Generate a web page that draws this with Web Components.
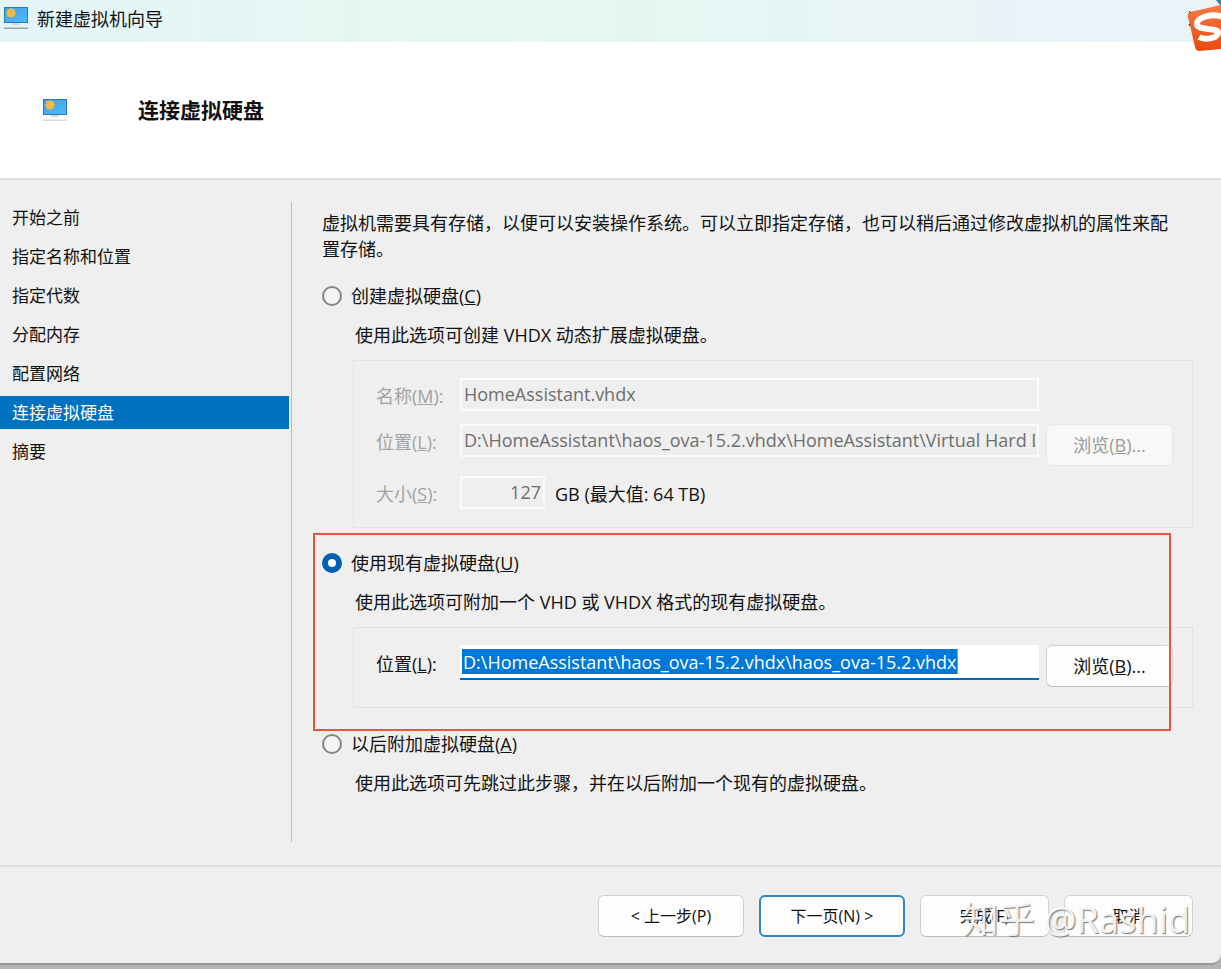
<!DOCTYPE html>
<html lang="zh-CN">
<head>
<meta charset="utf-8">
<title>新建虚拟机向导</title>
<style>
  html, body { height: 100%; }
  body {
    margin: 0;
    background: #b4b4b4;
    font-family: "Open Sans", "Noto Sans CJK SC", sans-serif;
    font-size: 18px;
    line-height: 26px;
    color: #111;
    overflow: hidden;
  }
</style>
</head>
<body>
<wizard-window></wizard-window>

<script>
const define = (name, html, setup) => {
  const template = document.createElement('template');
  template.innerHTML = html;
  customElements.define(name, class extends HTMLElement {
    connectedCallback() {
      if (this.shadowRoot) return;
      const root = this.attachShadow({ mode: 'open' });
      root.append(template.content.cloneNode(true));
      if (setup) setup(this, root);
    }
  });
};

define('monitor-icon', `
  <style>
    :host { display: block; width: 26px; height: 24px; }
    svg { display: block; width: 100%; height: 100%; }
    .base { fill: var(--monitor-base, #97a2aa); }
  </style>
  <svg viewBox="0 0 26 24" aria-hidden="true">
    <defs><linearGradient id="s" x1="0" y1="0" x2="1" y2="1">
      <stop offset="0" stop-color="#3ea0e6"/><stop offset="1" stop-color="#50bbfb"/>
    </linearGradient></defs>
    <rect x="1" y="1" width="24" height="16" fill="#2b78b4"/>
    <rect x="2" y="2" width="22" height="14" fill="url(#s)"/>
    <path d="M10 17h6l2 2H8z" fill="#c4dde8"/>
    <path class="base" d="M1 21.500h24v1.500H1z"/>
    <g stroke="#d8b44c" stroke-width="2"><path d="M8 2v10M3 7h10M4.500 3.500l7 7M11.500 3.500l-7 7"/></g>
    <circle cx="8" cy="7" r="4" fill="#f5b841"/>
  </svg>`);

define('ime-badge', `
  <style>
    :host { display: block; width: 34px; height: 54px; overflow: hidden; }
    svg { display: block; }
  </style>
  <svg width="34" height="54" viewBox="0 0 34 54" aria-hidden="true">
    <defs><linearGradient id="o" x1="0" y1="0" x2="0" y2="1">
      <stop offset="0" stop-color="#f47a45"/><stop offset="1" stop-color="#e94a0e"/>
    </linearGradient></defs>
    <path d="M29 0h5v6z" fill="#3f7c96"/>
    <path d="M3 12 34 5V49L12 51Q9 51 8 47L1 17Q0 13 3 12z" fill="url(#o)"/>
    <path d="M36 17C26 13 10 17 10 24c0 7 22 3 21 9-1 6-14 7-19 4" fill="none" stroke="#fff" stroke-width="6"/>
    <path d="M2 11l2 2M2 24l1 2" stroke="#222" stroke-width="1"/>
  </svg>`);

define('title-bar', `
  <style>
    :host {
      display: flex; align-items: flex-start; gap: 8px; position: relative;
      height: 42px; padding: 6px 0 0 3px; box-sizing: border-box; color: #111;
      background: linear-gradient(90deg, #e3f5f7, #e5f6f3 27%, #e7f7ef 36%, #e7f5f3 56%, #e9f3f9 90%, #eaf4f7);
    }
    h1 { margin: 0; font: inherit; }
    ime-badge { position: absolute; right: 0; top: 0; z-index: 1; }
  </style>
  <monitor-icon></monitor-icon><h1><slot></slot></h1><ime-badge></ime-badge>`);

define('page-heading', `
  <style>
    :host {
      display: flex; align-items: center; gap: 70px; height: 138px; box-sizing: border-box;
      padding-left: 42px; background: #fff; border-bottom: 2px solid #dedede;
      --monitor-base: #d3dce1;
    }
    h2 { margin: 0; font-size: 21px; line-height: 28px; font-weight: 700; }
  </style>
  <monitor-icon></monitor-icon><h2><slot></slot></h2>`);

define('step-list', `
  <style>
    :host { display: block; font-size: 17px; line-height: 33px; }
    div { display: grid; gap: 6px; }
  </style>
  <div role="list"><slot></slot></div>`);

define('step-item', `
  <style>
    :host { display: block; }
    a { display: block; padding-left: 12px; color: inherit; text-decoration: none; }
    :host([current]) { background: #0071be; color: #fff; }
  </style>
  <a href="#"><slot></slot></a>`,
  (host, root) => {
    host.setAttribute('role', 'listitem');
    if (host.hasAttribute('current')) root.querySelector('a').setAttribute('aria-current', 'step');
  });

define('push-button', `
  <style>
    :host { display: block; }
    button {
      display: block; width: 100%; height: 42px; padding: 0; box-sizing: border-box;
      font: inherit; color: inherit; background: #fdfdfd;
      border: 1px solid #d0d0d0; border-bottom-color: #bcbcbc; border-radius: 6px;
    }
    :host([primary]) button { border: 2px solid #2f86c8; }
    button:disabled { color: #9c9c9c; background: #f8f8f8; border-color: #e6e6e6; }
  </style>
  <button type="button"><slot></slot></button>`,
  (host, root) => { root.querySelector('button').disabled = host.hasAttribute('disabled'); });

define('text-field', `
  <style>
    :host { display: grid; grid-template-columns: 84px minmax(0, 1fr); align-items: center; }
    label { padding-top: 2px; }
    :host([disabled]) label { color: #a2a2a2; }
    .box {
      display: flex; align-items: flex-start; height: 33px; box-sizing: border-box;
      background: #fff; border: 0 solid #0067b8; border-bottom-width: 2px; padding: 0 2px;
    }
    input {
      width: 100%; height: 27px; margin-top: 2px; padding: 0 1px; border: 0; outline: 0; box-sizing: border-box;
      background: transparent; color: inherit; font: inherit; line-height: 26px;
    }
    :host([selected]) .box { height: 35px; }
    :host([selected]) input {
      flex: none; width: auto; field-sizing: content; height: 25px; margin-top: 4px;
      background: #0078d7; color: #fff; border-right: 1px solid #e8833a;
    }
    :host([disabled]) .box { border: 2px solid #fbfbfb; background: #efefef; padding: 0 1px; }
    :host([disabled]) input { color: #6e6e6e; margin-top: 0; }
    :host([numeric]) input { text-align: right; }
  </style>
  <label for="field"><slot></slot></label>
  <span class="box"><input id="field" type="text"></span>`,
  (host, root) => {
    const input = root.querySelector('input');
    input.value = host.getAttribute('value');
    input.disabled = host.hasAttribute('disabled');
  });

define('disk-option', `
  <style>
    :host { display: block; position: relative; }
    .choice { display: flex; align-items: center; gap: 9px; height: 26px; }
    input {
      appearance: none; flex: none; width: 20px; height: 20px; margin: 0; box-sizing: border-box;
      border: 2px solid #858585; border-radius: 50%; background: #f5f5f5;
    }
    input:checked { border: 6px solid #005fb3; background: #fff; }
    p { margin: 13px 0 0 33px; }
  </style>
  <div class="choice"><input id="r" type="radio"><label for="r"><slot name="label"></slot></label></div>
  <p><slot name="note"></slot></p>
  <slot></slot>`,
  (host, root) => { root.querySelector('input').checked = host.hasAttribute('checked'); });

define('field-group', `
  <style>
    :host {
      display: grid; grid-template-columns: minmax(0, 1fr) 127px; column-gap: 7px; align-items: start;
      margin: 12px 0 0 31px; padding: 17px 19px 0 22px; box-sizing: border-box; border: 1px solid #e2e2e2;
    }
  </style>
  <slot></slot>`);

define('highlight-frame', `
  <style>
    :host {
      display: block; position: absolute; inset: -17px 22px -23px -9px;
      border: 2px solid #f0533f; pointer-events: none;
    }
  </style>`);

define('water-mark', `
  <style>
    :host {
      display: block; position: absolute; right: 31px; top: 28px; white-space: nowrap; pointer-events: none;
      font: 36px/50px "Noto Sans", "Noto Sans CJK SC", sans-serif; color: rgba(255,255,255,.9);
      text-shadow: 1px 1px 1px #777;
    }
  </style>
  <slot></slot>`);

define('wizard-window', `
  <style>
    :host {
      display: flex; flex-direction: column; min-height: calc(100% - 4px); box-sizing: border-box;
      background: #efefef; border-bottom: 2px solid #989898; border-radius: 0 0 10px 0;
    }
    .body { flex: 1; display: grid; grid-template-columns: 289px minmax(0, 1fr); padding: 22px 28px 23px 0; }
    nav { margin-top: -1px; }
    .content { margin-left: 2px; border-left: 1px solid #bdbdbd; padding: 8px 0 0 30px; }
    .intro { margin: 0 0 21px; padding-right: 20px; }
    .size { display: flex; align-items: center; gap: 10px; grid-column: 1 / -1; }
    .size text-field { width: 169px; }
    .size span { padding-top: 2px; }
    .wide { grid-column: 1; }
    .browse { grid-column: 2; }
    .create { height: 168px; grid-template-rows: 46px 52px 33px; }
    .existing { height: 81px; }
    .second { margin-top: 22px; }
    .third { margin-top: 23px; }
    footer {
      display: flex; justify-content: flex-end; gap: 15px; position: relative; height: 98px; box-sizing: border-box;
      padding: 28px 28px 0; border-top: 2px solid #dfdfdf; font-size: 16px;
    }
    footer push-button { width: 146px; }
    footer .narrow { width: 129px; }
  </style>
  <title-bar>新建虚拟机向导</title-bar>
  <page-heading>连接虚拟硬盘</page-heading>
  <div class="body">
    <nav><step-list>
      <step-item>开始之前</step-item>
      <step-item>指定名称和位置</step-item>
      <step-item>指定代数</step-item>
      <step-item>分配内存</step-item>
      <step-item>配置网络</step-item>
      <step-item current>连接虚拟硬盘</step-item>
      <step-item>摘要</step-item>
    </step-list></nav>
    <main class="content">
      <p class="intro">虚拟机需要具有存储，以便可以安装操作系统。可以立即指定存储，也可以稍后通过修改虚拟机的属性来配置存储。</p>
      <disk-option>
        <span slot="label">创建虚拟硬盘(<u>C</u>)</span>
        <span slot="note">使用此选项可创建 VHDX 动态扩展虚拟硬盘。</span>
        <field-group class="create">
          <text-field class="wide" disabled value="HomeAssistant.vhdx">名称(<u>M</u>):</text-field>
          <text-field class="wide" disabled value="D:\\HomeAssistant\\haos_ova-15.2.vhdx\\HomeAssistant\\Virtual Hard Disks\\">位置(<u>L</u>):</text-field>
          <push-button class="browse" disabled>浏览(<u>B</u>)...</push-button>
          <div class="size"><text-field disabled numeric value="127">大小(<u>S</u>):</text-field><span>GB (最大值: 64 TB)</span></div>
        </field-group>
      </disk-option>
      <disk-option class="second" checked>
        <span slot="label">使用现有虚拟硬盘(<u>U</u>)</span>
        <span slot="note">使用此选项可附加一个 VHD 或 VHDX 格式的现有虚拟硬盘。</span>
        <field-group class="existing">
          <text-field class="wide" selected value="D:\\HomeAssistant\\haos_ova-15.2.vhdx\\haos_ova-15.2.vhdx">位置(<u>L</u>):</text-field>
          <push-button class="browse">浏览(<u>B</u>)...</push-button>
        </field-group>
        <highlight-frame></highlight-frame>
      </disk-option>
      <disk-option class="third">
        <span slot="label">以后附加虚拟硬盘(<u>A</u>)</span>
        <span slot="note">使用此选项可先跳过此步骤，并在以后附加一个现有的虚拟硬盘。</span>
      </disk-option>
    </main>
  </div>
  <footer>
    <push-button>&lt; 上一步(P)</push-button>
    <push-button primary>下一页(N) &gt;</push-button>
    <push-button class="narrow">完成(F)</push-button>
    <push-button class="narrow">取消</push-button>
    <water-mark>知乎 @Rashid</water-mark>
  </footer>`);
</script>
</body>
</html>
